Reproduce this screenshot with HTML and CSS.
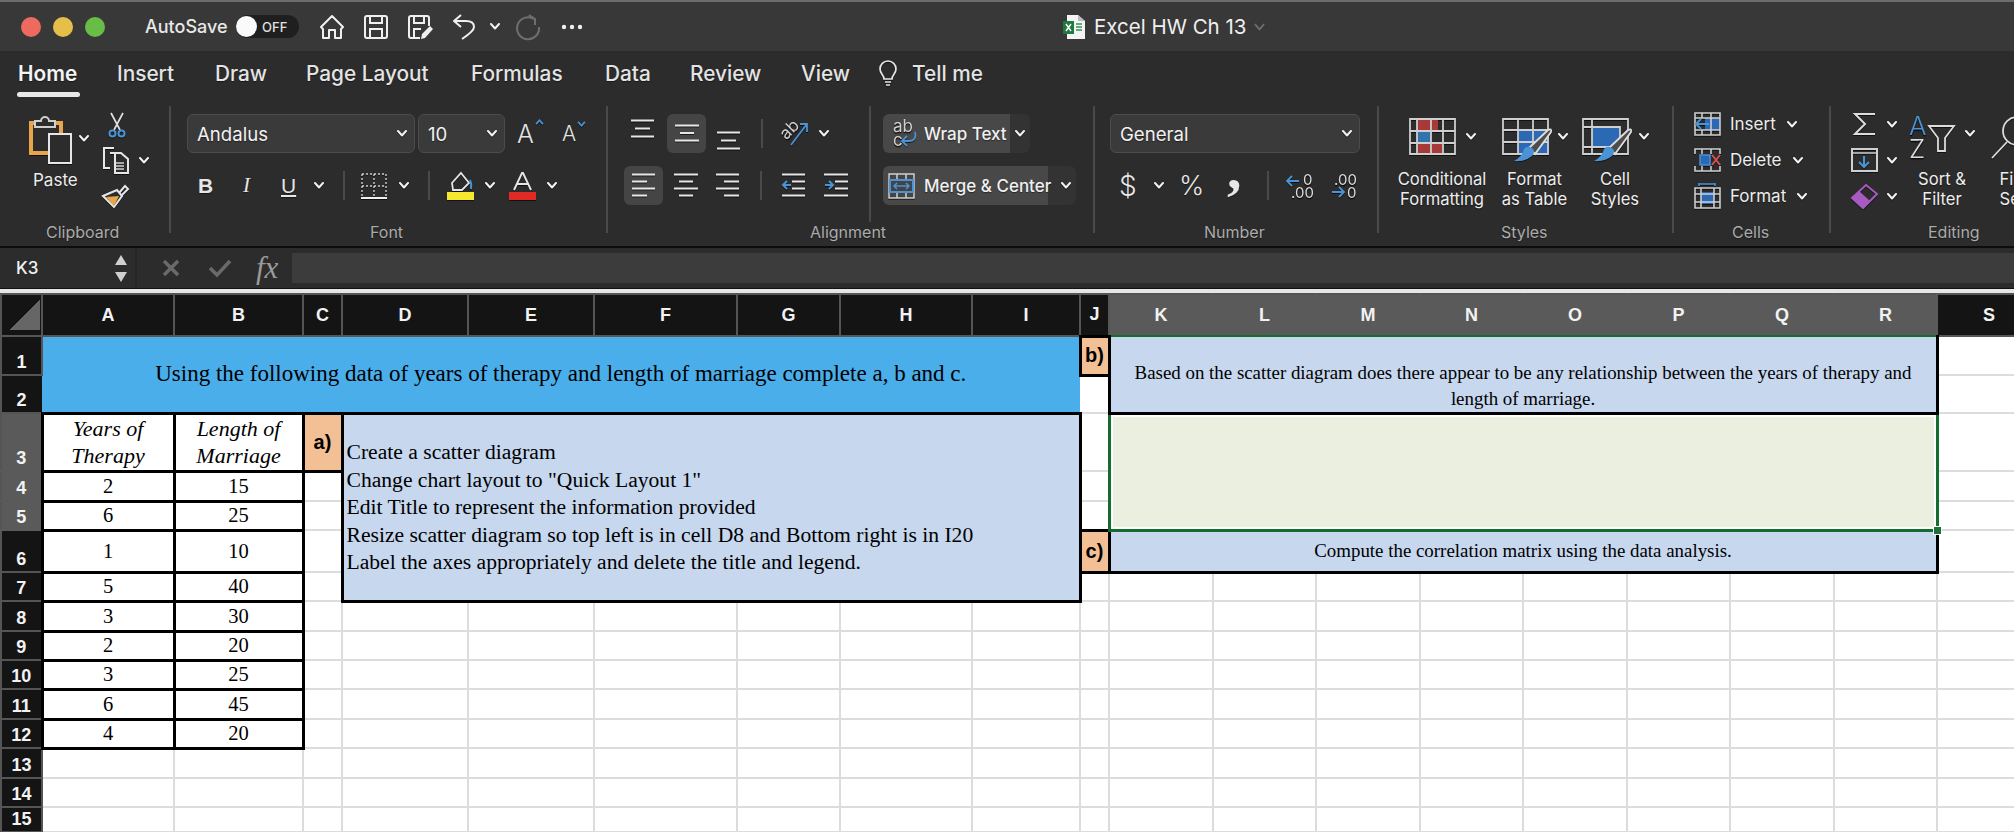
FILE: index.html
```html
<!DOCTYPE html>
<html lang="en">
<head>
<meta charset="utf-8">
<title>Excel HW Ch 13</title>
<link rel="stylesheet" href="styles.css">
</head>
<body>
<svg class="defs" width="0" height="0" aria-hidden="true">
  <symbol id="chev" viewBox="0 0 10 7"><polyline points="1,1 5,5.5 9,1" fill="none" stroke="#f2f2f2" stroke-width="2" stroke-linecap="round" stroke-linejoin="round"/></symbol>
  <g id="l-top"><path d="M0 6.5h23M4 14.5h15M0 22.5h23"/></g>
  <g id="l-mid"><path d="M0 11.5h24M5 19h14M0 26.5h24"/></g>
  <g id="l-bot"><path d="M0 18.5h23M4 26.5h15M0 34.5h23"/></g>
  <g id="l-left"><path d="M0 8.5h23M0 15.5h15M0 22.5h23M0 29.5h15"/></g>
  <g id="l-center"><path d="M0 8.5h24M5 15.5h14M0 22.5h24M5 29.5h14"/></g>
  <g id="l-right"><path d="M0 8.5h23M8 15.5h15M0 22.5h23M8 29.5h15"/></g>
  <g id="brush"><path d="M27 30 L46 12 Q50 10 49 14 L33 36 Z" fill="#4d4d4d" stroke="#dedede" stroke-width="1.8"/><path d="M12 43 Q23 44 30 38 Q34 33 30 30 Q25 27 22 31 Q20 39 12 43 Z" fill="#4a93d4"/></g>
</svg>
<div class="window">
  <header class="titlebar">
    <span class="light red"></span><span class="light yellow"></span><span class="light green"></span>
    <span class="autosave">AutoSave</span>
    <span class="toggle"><span class="knob"></span><span class="off">OFF</span></span>
    <svg class="ic ml-20" width="26" height="26" viewBox="0 0 26 26"><path d="M2 13 L13 2 L24 13 L22 15 V24 H16 V16 H10 V24 H4 V15 Z" fill="none" stroke="#f0f0f0" stroke-width="2" stroke-linejoin="round"/></svg>
    <svg class="ic ml-18" width="26" height="26" viewBox="0 0 26 26"><path d="M4 2 H22 Q24 2 24 4 V22 Q24 24 22 24 H4 Q2 24 2 22 V4 Q2 2 4 2 Z M7 2 V9 H19 V2 M7 24 V15 H19 V24" fill="none" stroke="#f0f0f0" stroke-width="2"/></svg>
    <svg class="ic ml-18" width="26" height="26" viewBox="0 0 26 26"><path d="M13 24 H4 Q2 24 2 22 V4 Q2 2 4 2 H20 Q22 2 22 4 V12 M7 2 V9 H17 V2 M7 24 V15 H14" fill="none" stroke="#f0f0f0" stroke-width="2"/><path d="M14 25 L15 20 L23 12 L26 15 L18 24 Z" fill="#f0f0f0"/></svg>
    <svg class="ic ml-19" width="24" height="26" viewBox="0 0 24 26"><path d="M9 1 L2 7 L9 13 M2 7 H14 Q22 7 22 13 Q22 17 10 25" fill="none" stroke="#f0f0f0" stroke-width="2" stroke-linejoin="round"/></svg>
    <svg class="chev ml-14"><use href="#chev"/></svg>
    <svg class="ic ml-15" width="26" height="26" viewBox="0 0 26 26"><path d="M19 5 A11 11 0 1 0 24 13 M14 1 L20 5 V11" fill="none" stroke="#6e6e6e" stroke-width="2"/></svg>
    <svg class="ic ml-20" width="22" height="6" viewBox="0 0 22 6"><circle cx="3" cy="3" r="2.2" fill="#f0f0f0"/><circle cx="11" cy="3" r="2.2" fill="#f0f0f0"/><circle cx="19" cy="3" r="2.2" fill="#f0f0f0"/></svg>
    <div class="doc">
      <svg width="23" height="26" viewBox="0 0 23 26"><path d="M4 1 H15 L22 7 V25 H4 Z" fill="#f4f4f4"/><path d="M15 1 V7 H22 Z" fill="#bbb"/><rect x="0" y="7" width="11" height="13" fill="#1f7a40"/><path d="M3 10 L8 17 M8 10 L3 17" stroke="#fff" stroke-width="1.4"/><path d="M13 10h6M13 13h6M13 16h6" stroke="#3a8f55" stroke-width="1.5"/></svg>
      <span class="doc-name">Excel HW Ch 13</span>
      <svg class="chev dim" viewBox="0 0 10 7"><polyline points="1,1 5,5.5 9,1" fill="none" stroke="#6e6e6e" stroke-width="1.6"/></svg>
    </div>
  </header>

  <section class="ribbon">
    <nav class="tabs">
      <span class="tab active t-home">Home</span>
      <span class="tab t-insert">Insert</span>
      <span class="tab t-draw">Draw</span>
      <span class="tab t-page">Page Layout</span>
      <span class="tab t-form">Formulas</span>
      <span class="tab t-data">Data</span>
      <span class="tab t-review">Review</span>
      <span class="tab t-view">View</span>
      <svg class="t-bulb" width="20" height="26" viewBox="0 0 20 26"><path d="M6 18 C6 14 2 13 2 8 A8 8 0 0 1 18 8 C18 13 14 14 14 18 Z M7 21 H13 M8 24 H12" fill="none" stroke="#e8e8e8" stroke-width="1.7"/></svg>
      <span class="tab t-tell">Tell me</span>
    </nav>

    <div class="groups">
      <!-- Clipboard -->
      <div class="group g-clip">
        <div class="body clip-body">
          <div class="paste">
            <svg width="46" height="50" viewBox="0 0 46 50"><path d="M2 6 H36 V40 H2 Z M6 10 V36 H20 V10 Z" fill="#e8a64a" fill-rule="evenodd"/><path d="M6 10 H32 V18 H22 V36 H6 Z" fill="#2c2c2c"/><path d="M8 12 V6 H14 A4 4 0 0 1 22 6 H28 V12 Z" fill="#2c2c2c" stroke="#cfcfcf" stroke-width="2"/><rect x="22" y="19" width="22" height="29" fill="#2c2c2c" stroke="#e6e6e6" stroke-width="2"/></svg>
            <span class="lbl paste-t">Paste</span>
          </div>
          <svg class="chev paste-chev"><use href="#chev"/></svg>
          <div class="clip-tools">
            <svg class="sciss" width="18" height="26" viewBox="0 0 18 26"><path d="M3 1 L12 18 M15 1 L6 18" stroke="#dcdcdc" stroke-width="1.8" fill="none"/><circle cx="4.5" cy="21.5" r="3" fill="none" stroke="#4a93d4" stroke-width="2"/><circle cx="13.5" cy="21.5" r="3" fill="none" stroke="#4a93d4" stroke-width="2"/></svg>
            <div class="row-copy">
              <svg width="28" height="28" viewBox="0 0 28 28"><path d="M12 2 H2 V22 H8" fill="none" stroke="#e6e6e6" stroke-width="2"/><path d="M8 7 H19 L26 13 V27 H13 V7" fill="#2c2c2c" stroke="#e6e6e6" stroke-width="2"/><path d="M14 17h8M14 20h8M14 23h8" stroke="#cfcfcf" stroke-width="1.3"/></svg>
              <svg class="chev ml-9"><use href="#chev"/></svg>
            </div>
            <svg class="fmt" width="26" height="24" viewBox="0 0 26 24"><path d="M17 9 L23 2 L26 5 L19 12" fill="none" stroke="#e6e6e6" stroke-width="2"/><path d="M1 12 L15 6 L20 12 L12 23 Z" fill="#2c2c2c" stroke="#e6e6e6" stroke-width="2"/><path d="M4 13 L17 12 L12 22 Z" fill="#e8a64a"/></svg>
          </div>
        </div>
        <div class="glabel gl-clip">Clipboard</div>
      </div>
      <span class="sep"></span>

      <!-- Font -->
      <div class="group g-font">
        <div class="body rows">
          <div class="row">
            <div class="combo ml-16 w-font">Andalus<svg class="chev"><use href="#chev"/></svg></div>
            <div class="combo ml-3 w-size">10<svg class="chev"><use href="#chev"/></svg></div>
            <span class="growA big ml-12">A<svg width="9" height="6" viewBox="0 0 10 7"><polyline points="1,6 5,1.5 9,6" fill="none" stroke="#4a93d4" stroke-width="2"/></svg></span>
            <span class="growA small ml-21">A<svg width="9" height="6" viewBox="0 0 10 7"><polyline points="1,1 5,5.5 9,1" fill="none" stroke="#4a93d4" stroke-width="2"/></svg></span>
          </div>
          <div class="row">
            <span class="fb b ml-27">B</span>
            <span class="fb i ml-30">I</span>
            <span class="fb u ml-29">U</span>
            <svg class="chev ml-19"><use href="#chev"/></svg>
            <span class="vsep ml-19"></span>
            <svg class="ml-16" width="26" height="26" viewBox="0 0 26 26"><path d="M1 1 H25 M1 13 H25 M1 1 V25 M25 1 V25 M13 1 V25" fill="none" stroke="#cfcfcf" stroke-width="1.4" stroke-dasharray="2 2"/><path d="M0 25 H26" stroke="#f0f0f0" stroke-width="2"/></svg>
            <svg class="chev ml-12"><use href="#chev"/></svg>
            <span class="vsep ml-19"></span>
            <svg class="ml-17" width="27" height="28" viewBox="0 0 27 28"><path d="M14 1 L22 11 L15 18 L6 18 L5 11 Z" fill="none" stroke="#e6e6e6" stroke-width="1.8"/><path d="M23 8 Q25 12 24 17" stroke="#4a93d4" stroke-width="2" fill="none"/><rect y="20" width="27" height="8" fill="#f5e82e"/></svg>
            <svg class="chev ml-11"><use href="#chev"/></svg>
            <svg class="ml-14" width="27" height="28" viewBox="0 0 27 28"><path d="M5 18 L13 1 H14 L22 18 M8 12 H19" fill="none" stroke="#e6e6e6" stroke-width="1.9"/><rect y="20" width="27" height="8" fill="#e02b24"/></svg>
            <svg class="chev ml-11"><use href="#chev"/></svg>
          </div>
        </div>
        <div class="glabel gl-font">Font</div>
      </div>
      <span class="sep"></span>

      <!-- Alignment -->
      <div class="group g-align">
        <div class="body align-body">
          <div class="rows align-left">
            <div class="row">
              <svg class="al ml-23" width="24" height="39"><use href="#l-top"/></svg>
              <span class="tbtn on ml-12"><svg class="al" width="24" height="39"><use href="#l-mid"/></svg></span>
              <svg class="al ml-11" width="24" height="39"><use href="#l-bot"/></svg>
              <span class="vsep ml-20"></span>
              <svg class="ml-18" width="28" height="25" viewBox="0 0 28 25"><text x="0" y="15" transform="rotate(-45 8 11)" class="abtxt">ab</text><path d="M10 24 L26 3 M19 3 H26 V11" fill="none" stroke="#4a93d4" stroke-width="1.8"/></svg>
              <svg class="chev ml-10"><use href="#chev"/></svg>
            </div>
            <div class="row">
              <span class="tbtn on ml-16"><svg class="al" width="24" height="39"><use href="#l-left"/></svg></span>
              <svg class="al ml-11" width="24" height="39"><use href="#l-center"/></svg>
              <svg class="al ml-18" width="24" height="39"><use href="#l-right"/></svg>
              <span class="vsep ml-20"></span>
              <svg class="al ml-20" width="24" height="39"><path d="M0 8.5h23M10 15.5h13M10 22.5h13M0 29.5h23"/><path class="blue" d="M1 19h8M5 15L1 19L5 23"/></svg>
              <svg class="al ml-18" width="24" height="39"><path d="M0 8.5h24M11 15.5h13M11 22.5h13M0 29.5h24"/><path class="blue" d="M1 19h8M5 15L9 19L5 23"/></svg>
            </div>
          </div>
          <span class="subsep"></span>
          <div class="rows align-right">
            <div class="row">
              <div class="split ml-12">
                <div class="main w-wrap">
                  <svg class="ml-10" width="24" height="28" viewBox="0 0 24 28"><text x="0" y="12" class="wtxt">ab</text><text x="0" y="26" class="wtxt">c</text><path d="M22 12 Q24 20 17 21 H10 M14 16 L9 21 L14 26" fill="none" stroke="#4a93d4" stroke-width="1.8"/></svg>
                  <span class="btxt ml-7">Wrap Text</span>
                </div>
                <div class="drop d-wrap"><svg class="chev"><use href="#chev"/></svg></div>
              </div>
            </div>
            <div class="row">
              <div class="split ml-12">
                <div class="main w-merge">
                  <svg class="ml-6" width="25" height="26" viewBox="0 0 25 26"><path d="M0 1 H25 V25 H0 Z M8 1 V25 M17 1 V25" fill="#444" stroke="#cfcfcf" stroke-width="1.5"/><rect x="1" y="7" width="23" height="12" fill="#444" stroke="#4a93d4" stroke-width="2"/><path d="M5 13 H20 M8 10 L5 13 L8 16 M17 10 L20 13 L17 16" fill="none" stroke="#4a93d4" stroke-width="1.5"/></svg>
                  <span class="btxt ml-10">Merge &amp; Center</span>
                </div>
                <div class="drop d-merge"><svg class="chev"><use href="#chev"/></svg></div>
              </div>
            </div>
          </div>
        </div>
        <div class="glabel gl-align">Alignment</div>
      </div>
      <span class="sep"></span>

      <!-- Number -->
      <div class="group g-num">
        <div class="body rows">
          <div class="row"><div class="combo ml-15 w-gen">General<svg class="chev"><use href="#chev"/></svg></div></div>
          <div class="row">
            <span class="numsym dollar ml-24">$</span>
            <svg class="chev ml-19"><use href="#chev"/></svg>
            <span class="numsym pct ml-15">%</span>
            <span class="numsym comma ml-25">,</span>
            <span class="vsep ml-26"></span>
            <svg class="ml-17" width="27" height="26" viewBox="0 0 27 26"><path d="M1 8 H13 M6 3 L1 8 L6 13" fill="none" stroke="#4a93d4" stroke-width="1.8"/><text x="17" y="12" class="dtxt">0</text><text x="5" y="25" class="dtxt">.00</text></svg>
            <svg class="ml-18" width="26" height="26" viewBox="0 0 26 26"><text x="3" y="12" class="dtxt">.00</text><path d="M1 19 H12 M8 14 L13 19 L8 24" fill="none" stroke="#4a93d4" stroke-width="1.8"/><text x="16" y="25" class="dtxt">0</text></svg>
          </div>
        </div>
        <div class="glabel gl-num">Number</div>
      </div>
      <span class="sep"></span>

      <!-- Styles -->
      <div class="group g-styles">
        <div class="body styles-body">
          <div class="sitem w-cond">
            <div class="siconrow">
              <svg width="47" height="37" viewBox="0 0 47 37"><rect x="8" y="1" width="21" height="12" fill="#a73a39"/><rect x="8" y="13" width="14" height="12" fill="#3373ac"/><rect x="8" y="25" width="25" height="11" fill="#a73a39"/><path d="M1 1 H46 V36 H1 Z M8 1 V36 M22 1 V36 M34 1 V36 M1 13 H46 M1 25 H46" fill="none" stroke="#cfcfcf" stroke-width="1.8"/></svg>
              <svg class="chev ml-10"><use href="#chev"/></svg>
            </div>
            <div class="lbl stl">Conditional<br>Formatting</div>
          </div>
          <div class="sitem w-ftab">
            <div class="siconrow">
              <svg width="52" height="44" viewBox="0 0 52 44"><rect x="16" y="12" width="31" height="24" fill="#2c69b5"/><path d="M1 1 H46 V36 H1 Z M16 1 V36 M31 1 V36 M1 12 H46 M1 24 H46" fill="none" stroke="#cfcfcf" stroke-width="1.8"/><use href="#brush"/></svg>
              <svg class="chev ml-4"><use href="#chev"/></svg>
            </div>
            <div class="lbl stl">Format<br>as Table</div>
          </div>
          <div class="sitem w-cell">
            <div class="siconrow">
              <svg width="52" height="44" viewBox="0 0 52 44"><rect x="10" y="9" width="28" height="20" fill="#2c69b5"/><path d="M1 1 H46 V36 H1 Z M10 9 H38 V29 M1 9 H10 M10 1 V36 M1 29 H38" fill="none" stroke="#cfcfcf" stroke-width="1.8"/><use href="#brush"/></svg>
              <svg class="chev ml-5"><use href="#chev"/></svg>
            </div>
            <div class="lbl stl">Cell<br>Styles</div>
          </div>
        </div>
        <div class="glabel gl-styles">Styles</div>
      </div>
      <span class="sep"></span>

      <!-- Cells -->
      <div class="group g-cells">
        <div class="body cells-body">
          <div class="crow">
            <svg width="27" height="24" viewBox="0 0 27 24"><rect x="11" y="6" width="15" height="12" fill="#2c69b5"/><path d="M1 1 H26 V23 H1 Z M1 6 H26 M1 18 H26 M8 1 V6 M17 1 V23 M8 18 V23" fill="none" stroke="#cfcfcf" stroke-width="1.6"/><path d="M15 12 H2 M7 7 L2 12 L7 17" fill="none" stroke="#4a93d4" stroke-width="2"/></svg>
            <span class="lbl ml-9 w-ins">Insert</span><svg class="chev"><use href="#chev"/></svg>
          </div>
          <div class="crow">
            <svg width="27" height="24" viewBox="0 0 27 24"><path d="M1 6 V1 H26 V6 M1 18 V23 H26 V18 M8 1 V6 M8 18 V23 M17 1 V6 M17 18 V23" fill="none" stroke="#cfcfcf" stroke-width="1.6"/><rect x="6" y="7" width="10" height="10" fill="#2c69b5" stroke="#4a93d4" stroke-width="1.5"/><path d="M18 7 L26 17 M26 7 L18 17" stroke="#d9534f" stroke-width="2"/></svg>
            <span class="lbl ml-9 w-del">Delete</span><svg class="chev"><use href="#chev"/></svg>
          </div>
          <div class="crow">
            <svg width="27" height="26" viewBox="0 0 27 26"><path d="M5 1 H21 M5 0 V3 M21 0 V3" stroke="#4a93d4" stroke-width="1.6" fill="none"/><rect x="7" y="9" width="13" height="12" fill="#2c69b5"/><path d="M1 5 H26 V25 H1 Z M1 11 H26 M1 19 H26 M7 5 V25 M20 5 V25" fill="none" stroke="#cfcfcf" stroke-width="1.6"/></svg>
            <span class="lbl ml-9 w-fmt">Format</span><svg class="chev"><use href="#chev"/></svg>
          </div>
        </div>
        <div class="glabel gl-cells">Cells</div>
      </div>
      <span class="sep"></span>

      <!-- Editing -->
      <div class="group g-edit">
        <div class="body edit-body">
          <div class="edit-tools">
            <div class="crow"><svg width="27" height="24" viewBox="0 0 27 24"><path d="M24 2 H4 L14 12 L4 22 H24" fill="none" stroke="#dcdcdc" stroke-width="2"/></svg><svg class="chev ml-9"><use href="#chev"/></svg></div>
            <div class="crow"><svg width="27" height="24" viewBox="0 0 27 24"><path d="M1 1 H26 V23 H1 Z" fill="none" stroke="#cfcfcf" stroke-width="2"/><path d="M1 5 H26" stroke="#cfcfcf" stroke-width="1.5"/><path d="M13 8 V19 M8 14 L13 19 L18 14" fill="none" stroke="#4a93d4" stroke-width="2"/></svg><svg class="chev ml-9"><use href="#chev"/></svg></div>
            <div class="crow"><svg width="27" height="25" viewBox="0 0 27 25"><path d="M1 14 L15 1 L26 10 L12 24 Z" fill="none" stroke="#a75bc0" stroke-width="2"/><path d="M1 14 L8 7 L19 17 L12 24 Z" fill="#a75bc0"/></svg><svg class="chev ml-9"><use href="#chev"/></svg></div>
          </div>
          <div class="sitem sortf">
            <div class="siconrow azrow">
              <svg width="46" height="44" viewBox="0 0 46 44"><text x="0" y="20" class="azA">A</text><text x="0" y="43" class="azZ">Z</text><path d="M20 11 H45 L36 23 V36 H29 V23 Z" fill="none" stroke="#dcdcdc" stroke-width="1.8"/></svg>
              <svg class="chev ml-10"><use href="#chev"/></svg>
            </div>
            <div class="lbl stl">Sort &amp;<br>Filter</div>
          </div>
          <div class="sitem find">
            <div class="siconrow findrow">
              <svg width="40" height="44" viewBox="0 0 40 44"><circle cx="26" cy="16" r="14" fill="none" stroke="#dcdcdc" stroke-width="1.8"/><path d="M16 27 L1 43" stroke="#dcdcdc" stroke-width="1.8"/></svg>
            </div>
            <div class="lbl stl">Find &amp;<br>Select</div>
          </div>
        </div>
        <div class="glabel gl-edit">Editing</div>
      </div>
    </div>
  </section>

  <section class="formula">
    <div class="namebox"><span>K3</span><span class="carets"><svg width="14" height="12" viewBox="0 0 14 12"><path d="M7 1 L13 11 H1 Z" fill="#cfcfcf"/></svg><svg width="14" height="12" viewBox="0 0 14 12"><path d="M7 11 L13 1 H1 Z" fill="#cfcfcf"/></svg></span></div>
    <div class="fbtns">
      <svg width="18" height="18" viewBox="0 0 18 18"><path d="M2 2 L16 16 M16 2 L2 16" stroke="#6a6a6a" stroke-width="3.5"/></svg>
      <svg class="ml-28" width="24" height="18" viewBox="0 0 24 18"><path d="M2 9 L9 16 L22 2" fill="none" stroke="#6a6a6a" stroke-width="3.5"/></svg>
      <span class="fx">fx</span>
    </div>
    <div class="finput"></div>
  </section>

  <div class="sheetwrap">
    <table class="sheet">
      <colgroup>
        <col class="c-rh"><col class="c-a"><col class="c-b"><col class="c-c"><col class="c-d"><col class="c-e"><col class="c-f"><col class="c-g"><col class="c-h"><col class="c-i"><col class="c-j"><col class="c-k"><col class="c-l"><col class="c-m"><col class="c-n"><col class="c-o"><col class="c-p"><col class="c-q"><col class="c-r"><col class="c-s">
      </colgroup>
      <thead>
        <tr class="hdr">
          <th class="corner"><span class="tri"></span></th>
          <th>A</th><th>B</th><th>C</th><th>D</th><th>E</th><th>F</th><th>G</th><th>H</th><th>I</th><th>J</th>
          <th class="hsel">K</th><th class="hsel">L</th><th class="hsel">M</th><th class="hsel">N</th><th class="hsel">O</th><th class="hsel">P</th><th class="hsel">Q</th><th class="hsel">R</th><th>S</th>
        </tr>
      </thead>
      <tbody>
        <tr class="r1">
          <th class="rh">1</th>
          <td colspan="9" rowspan="2" class="banner">Using the following data of years of therapy and length of marriage complete a, b and c.</td>
          <td class="tag">b)</td>
          <td colspan="8" rowspan="2" class="note note-b">Based on the scatter diagram does there appear to be any relationship between the years of therapy and length of marriage.</td>
          <td></td>
        </tr>
        <tr class="r2"><th class="rh">2</th><td></td><td></td></tr>
        <tr class="r3">
          <th class="rh rsel">3</th>
          <td class="data head">Years of<br>Therapy</td><td class="data head">Length of<br>Marriage</td>
          <td class="tag">a)</td>
          <td colspan="6" rowspan="5" class="task"><div class="task-text">Create a scatter diagram<br>Change chart layout to "Quick Layout 1"<br>Edit Title to represent the information provided<br>Resize scatter diagram so top left is in cell D8 and Bottom right is in I20<br>Label the axes appropriately and delete the title and legend.</div></td>
          <td></td>
          <td colspan="8" rowspan="3" class="answer"><span class="ans-in"></span><span class="handle"></span></td>
          <td></td>
        </tr>
        <tr class="r4"><th class="rh rsel">4</th><td class="data">2</td><td class="data">15</td><td></td><td></td><td></td></tr>
        <tr class="r5"><th class="rh rsel">5</th><td class="data">6</td><td class="data">25</td><td></td><td></td><td></td></tr>
        <tr class="r6"><th class="rh">6</th><td class="data">1</td><td class="data">10</td><td></td><td class="tag">c)</td><td colspan="8" class="note">Compute the correlation matrix using the data analysis.</td><td></td></tr>
        <tr class="r7"><th class="rh">7</th><td class="data">5</td><td class="data">40</td><td></td><td></td><td></td><td></td><td></td><td></td><td></td><td></td><td></td><td></td><td></td><td></td></tr>
        <tr class="r8"><th class="rh">8</th><td class="data">3</td><td class="data">30</td><td></td><td></td><td></td><td></td><td></td><td></td><td></td><td></td><td></td><td></td><td></td><td></td><td></td><td></td><td></td><td></td><td></td></tr>
        <tr class="r9"><th class="rh">9</th><td class="data">2</td><td class="data">20</td><td></td><td></td><td></td><td></td><td></td><td></td><td></td><td></td><td></td><td></td><td></td><td></td><td></td><td></td><td></td><td></td><td></td></tr>
        <tr class="r10"><th class="rh">10</th><td class="data">3</td><td class="data">25</td><td></td><td></td><td></td><td></td><td></td><td></td><td></td><td></td><td></td><td></td><td></td><td></td><td></td><td></td><td></td><td></td><td></td></tr>
        <tr class="r11"><th class="rh">11</th><td class="data">6</td><td class="data">45</td><td></td><td></td><td></td><td></td><td></td><td></td><td></td><td></td><td></td><td></td><td></td><td></td><td></td><td></td><td></td><td></td><td></td></tr>
        <tr class="r12"><th class="rh">12</th><td class="data">4</td><td class="data">20</td><td></td><td></td><td></td><td></td><td></td><td></td><td></td><td></td><td></td><td></td><td></td><td></td><td></td><td></td><td></td><td></td><td></td></tr>
        <tr class="r13"><th class="rh">13</th><td></td><td></td><td></td><td></td><td></td><td></td><td></td><td></td><td></td><td></td><td></td><td></td><td></td><td></td><td></td><td></td><td></td><td></td><td></td></tr>
        <tr class="r14"><th class="rh">14</th><td></td><td></td><td></td><td></td><td></td><td></td><td></td><td></td><td></td><td></td><td></td><td></td><td></td><td></td><td></td><td></td><td></td><td></td><td></td></tr>
        <tr class="r15"><th class="rh">15</th><td></td><td></td><td></td><td></td><td></td><td></td><td></td><td></td><td></td><td></td><td></td><td></td><td></td><td></td><td></td><td></td><td></td><td></td><td></td></tr>
      </tbody>
    </table>
  </div>
</div>
</body>
</html>
```

FILE: styles.css
```css
* { box-sizing: border-box; }
html, body { margin: 0; padding: 0; height: 100%; overflow: hidden; background: #fff; }
body { font-family: Inter, "Liberation Sans", sans-serif; color: #f2f2f2; }
.defs { position: absolute; }
.window { width: 2014px; height: 832px; overflow: hidden; display: flex; flex-direction: column; background: #fff; }
svg { flex: none; display: block; overflow: visible; }

.ml-3{margin-left:3px}.ml-4{margin-left:4px}.ml-5{margin-left:5px}.ml-6{margin-left:6px}.ml-7{margin-left:7px}.ml-9{margin-left:9px}.ml-10{margin-left:10px}.ml-11{margin-left:11px}.ml-12{margin-left:12px}.ml-14{margin-left:14px}.ml-15{margin-left:15px}.ml-16{margin-left:16px}.ml-17{margin-left:17px}.ml-18{margin-left:18px}.ml-19{margin-left:19px}.ml-20{margin-left:20px}.ml-21{margin-left:21px}.ml-23{margin-left:23px}.ml-24{margin-left:24px}.ml-25{margin-left:25px}.ml-26{margin-left:26px}.ml-27{margin-left:27px}.ml-28{margin-left:28px}.ml-29{margin-left:29px}.ml-30{margin-left:30px}

.chev { width: 10px; height: 7px; flex: none; }

/* title bar */
.titlebar { height: 51px; flex: none; background: #383838; border-top: 2px solid #6c6c6c; display: flex; align-items: center; padding-left: 21px; position: relative; }
.light { width: 20px; height: 20px; border-radius: 50%; margin-right: 12px; }
.red { background: #ee6a5f; } .yellow { background: #e6bf4a; } .green { background: #68bd46; }
.autosave { margin-left: 28px; font-size: 18px; font-weight: 500; color: #e8e8e8; width: 81px; white-space: nowrap; }
.toggle { margin-left: 10px; width: 63px; height: 23px; border-radius: 12px; background: #1f1f1f; display: flex; align-items: center; }
.knob { width: 21px; height: 21px; border-radius: 50%; background: #fafafa; }
.off { font-size: 13px; margin-left: 5px; color: #e0e0e0; font-weight: 500; }
.doc { position: absolute; left: 1063px; top: 0; height: 49px; display: flex; align-items: center; }
.doc-name { margin-left: 8px; font-size: 20.5px; color: #efefef; width: 160px; white-space: nowrap; }
.dim { width: 13px; height: 8px; margin-left: -1px; }

/* ribbon */
.ribbon { height: 197px; flex: none; background: #2c2c2c; border-bottom: 2px solid #0c0c0c; text-shadow: 0 1px 1px rgba(0,0,0,.45); }
.ribbon svg { filter: drop-shadow(0 1px 0 rgba(0,0,0,.6)); }
.tabs { height: 55px; display: flex; align-items: flex-start; }
.tab { font-size: 20.8px; font-weight: 500; color: #e4e4e4; white-space: nowrap; height: 46px; line-height: 46px; position: relative; }
.tab.active { font-weight: 600; color: #f4f4f4; }
.tab.active::after { content: ""; position: absolute; left: -1px; right: -1px; bottom: 0; height: 5px; border-radius: 3px; background: #e8e8e8; }
.t-home { margin-left: 18px; width: 61px; }
.t-insert { margin-left: 38px; width: 59px; }
.t-draw { margin-left: 39px; width: 52px; }
.t-page { margin-left: 39px; width: 124px; }
.t-form { margin-left: 41px; width: 93px; }
.t-data { margin-left: 41px; width: 47px; }
.t-review { margin-left: 38px; width: 72px; }
.t-view { margin-left: 39px; width: 48px; }
.t-bulb { margin-left: 29px; margin-top: 10px; }
.t-tell { margin-left: 14px; width: 71px; }

.groups { display: flex; height: 140px; }
.group { flex: none; height: 140px; display: flex; flex-direction: column; }
.body { height: 113px; flex: none; }
.glabel { height: 27px; line-height: 27px; font-size: 16px; color: #ababab; white-space: nowrap; }
.sep { flex: none; width: 2px; height: 127px; background: #4a4a4a; }
.g-clip { width: 169px; } .g-font { width: 435px; } .g-align { width: 485px; } .g-num { width: 282px; } .g-styles { width: 293px; } .g-cells { width: 155px; } .g-edit { width: 184px; overflow: hidden; }
.gl-clip { padding-left: 46px; } .gl-font { padding-left: 199px; } .gl-align { padding-left: 202px; } .gl-num { padding-left: 109px; } .gl-styles { padding-left: 122px; } .gl-cells { padding-left: 58px; } .gl-edit { padding-left: 97px; }

.lbl { font-size: 17px; color: #ededed; white-space: nowrap; }
.rows { padding-top: 8px; display: flex; flex-direction: column; gap: 13px; }
.row { display: flex; align-items: center; height: 39px; }
.combo { height: 39px; border-radius: 6px; background: #3a3a3a; border: 1px solid #4c4c4c; display: flex; align-items: center; justify-content: space-between; font-size: 18.6px; padding: 0 7px 0 9px; }
.w-font { width: 228px; } .w-size { width: 87px; } .w-gen { width: 250px; }
.growA { display: flex; font-weight: 300; color: #e4e4e4; }
.growA.big { font-size: 25px; width: 24px; }
.growA.small { font-size: 21px; width: 21px; }
.growA svg { margin-left: 1px; }
.fb { font-size: 21px; color: #e6e6e6; font-family: "Liberation Sans", sans-serif; width: 13px; text-align: center; }
.fb.b { font-weight: 700; } .fb.i { font-style: italic; width: 11px; font-family: "Liberation Serif", serif; } .fb.u { text-decoration: underline; width: 14px; }
.vsep { width: 2px; height: 29px; background: #4a4a4a; flex: none; }

/* clipboard */
.clip-body { display: flex; padding-left: 27px; }
.paste { width: 52px; padding-top: 9px; display: flex; flex-direction: column; }
.paste-t { margin-top: 5px; padding-left: 6px; }
.paste-chev { margin-top: 29px; }
.clip-tools { margin-left: 13px; padding-top: 6px; display: flex; flex-direction: column; }
.sciss { margin-left: 6px; }
.row-copy { display: flex; align-items: center; margin-top: 8px; }
.fmt { margin-top: 10px; }

/* alignment */
.align-body { display: flex; }
.align-left { width: 261px; }
.al { fill: none; stroke: #e6e6e6; stroke-width: 2; }
.blue { stroke: #4a93d4; }
.tbtn { width: 39px; height: 39px; border-radius: 6px; background: #454545; display: flex; justify-content: center; flex: none; }
.subsep { width: 2px; height: 116px; background: #4a4a4a; flex: none; }
.align-right { width: 222px; }
.split { display: flex; height: 39px; }
.main { background: #484848; border-radius: 6px 0 0 6px; display: flex; align-items: center; position: relative; z-index: 1; }
.w-wrap { width: 127px; } .w-merge { width: 165px; }
.btxt { font-size: 17px; font-weight: 500; color: #f0f0f0; white-space: nowrap; }
.drop { background: #333; border-radius: 0 6px 6px 0; display: flex; align-items: center; justify-content: center; }
.d-wrap { width: 20px; } .d-merge { width: 28px; justify-content: flex-end; padding-right: 5px; }
.abtxt { font-size: 17px; fill: #cfcfcf; }
.wtxt { font-size: 17px; fill: #cfcfcf; }
.dtxt { font-size: 15px; fill: #dcdcdc; }

/* number */
.numsym { color: #e6e6e6; font-weight: 300; flex: none; }
.dollar { font-size: 28px; width: 16px; }
.pct { font-size: 27px; width: 25px; }
.comma { font-size: 58px; width: 12px; font-weight: 700; font-family: "Liberation Serif", serif; line-height: 20px; transform: translate(-2px, -17px); }

/* styles */
.styles-body { display: flex; padding: 12px 0 0 15px; }
.sitem { display: flex; flex-direction: column; align-items: center; flex: none; }
.w-cond { width: 96px; } .w-ftab { width: 89px; } .w-cell { width: 72px; }
.siconrow { display: flex; align-items: flex-start; height: 37px; }
.siconrow .chev { margin-top: 15px; }
.stl { margin-top: 15px; line-height: 19.5px; text-align: center; font-size: 16.6px; }

/* cells */
.cells-body { padding: 0 0 0 20px; }
.crow { height: 36px; display: flex; align-items: center; }
.w-ins { width: 57px; } .w-del { width: 63px; } .w-fmt { width: 67px; }

/* editing */
.edit-body { display: flex; padding-left: 20px; }
.edit-tools { width: 46px; }
.sortf { margin-left: 9px; width: 72px; padding-top: 9px; }
.azrow { height: 40px; }
.azA { font-size: 26px; fill: #4a93d4; font-weight: 300; }
.azZ { font-size: 26px; fill: #dcdcdc; font-weight: 300; }
.find { margin-left: 13px; width: 66px; padding-top: 9px; align-items: center; }
.findrow { height: 40px; align-self: flex-start; }

/* formula bar */
.formula { height: 41px; flex: none; background: #2c2c2c; display: flex; align-items: center; border-bottom: 1px solid #111; }
.namebox { width: 137px; height: 100%; display: flex; align-items: center; justify-content: space-between; padding: 0 7px 0 16px; font-size: 17px; font-weight: 500; border-right: 2px solid #262626; }
.carets { display: flex; flex-direction: column; gap: 5px; }
.fbtns { width: 155px; display: flex; align-items: center; padding-left: 25px; }
.fx { font-family: "Liberation Serif", serif; font-style: italic; font-size: 31px; color: #9a9a9a; margin-left: 24px; }
.finput { flex: 1; height: 30px; background: #3c3c3c; }

/* sheet */
.sheetwrap { flex: 1; overflow: hidden; background: #fff; border-top: 4px solid #e6e6e6; }
.sheet { border-collapse: collapse; table-layout: fixed; width: 2039px; font-family: "Liberation Serif", serif; color: #000; }
.c-rh { width: 41px; } .c-a { width: 132px; } .c-b { width: 129px; } .c-c { width: 39px; } .c-d { width: 126px; } .c-e { width: 126px; } .c-f { width: 143px; } .c-g { width: 103px; } .c-h { width: 132px; } .c-i { width: 108px; } .c-j { width: 29px; }
.c-k { width: 104px; } .c-l { width: 103px; } .c-m { width: 104px; } .c-n { width: 103px; } .c-o { width: 104px; } .c-p { width: 103px; } .c-q { width: 104px; } .c-r { width: 103px; } .c-s { width: 104px; }
.sheet td { border: 2px solid #dcdcdc; padding: 0; background: #fff; }
.sheet th { font-family: "Liberation Sans", sans-serif; font-weight: 700; font-size: 18px; color: #f2f2f2; background: #141414; border: 2px solid #555; padding: 0; }
.hdr { height: 42px; }
.corner { position: relative; }
.tri { display: block; width: 30px; height: 30px; margin-left: 8px; background: linear-gradient(to bottom right, transparent 50%, #666 50%); }
.hsel { background: #5a5a5a !important; border-left-color: #5a5a5a !important; border-right-color: #5a5a5a !important; border-bottom: 2px solid #146c2e !important; }
.rsel { background: #5a5a5a !important; border-top-color: #5a5a5a !important; border-bottom-color: #5a5a5a !important; border-right: 2px solid #146c2e !important; }
.rh { vertical-align: bottom; padding-bottom: 1px !important; }
.r1 { height: 39px; } .r2 { height: 38px; } .r3 { height: 58px; } .r4 { height: 30px; } .r5 { height: 29px; } .r6 { height: 42px; } .r7 { height: 29px; } .r8 { height: 30px; } .r9 { height: 29px; } .r10 { height: 29px; } .r11 { height: 30px; } .r12 { height: 29px; } .r13 { height: 30px; } .r14 { height: 29px; } .r15 { height: 25px; }

.sheet .banner { background: #4aaeea; font-size: 23px; text-align: center; border-color: transparent; border-bottom: 3px solid #000; }
.sheet .tag { background: #f2c094; font-family: "Liberation Sans", sans-serif; font-weight: 700; font-size: 20px; text-align: center; border: 3px solid #000; }
.sheet .data { border: 3px solid #000; text-align: center; font-size: 20.5px; }
.sheet .head { font-style: italic; line-height: 27px; font-size: 22px; }
.sheet .task { background: #c6d7ee; border: 3px solid #000; font-size: 21.6px; line-height: 27.5px; padding-left: 3px; }
.task-text { margin-top: 2px; }
.sheet .note { background: #c6d7ee; border: 3px solid #000; font-size: 18.9px; text-align: center; }
.sheet .note-b { vertical-align: bottom; line-height: 26px; padding: 0 14px; border-top: 2px solid #146c2e; }
.sheet .answer { position: relative; background: #ebefdf; border: 3px solid #146c2e; }
.ans-in { position: absolute; inset: 0; border: 2px solid #fff; }
.handle { position: absolute; right: -6px; bottom: -6px; width: 9px; height: 9px; background: #1d6f3c; border: 1px solid #fff; }
```
